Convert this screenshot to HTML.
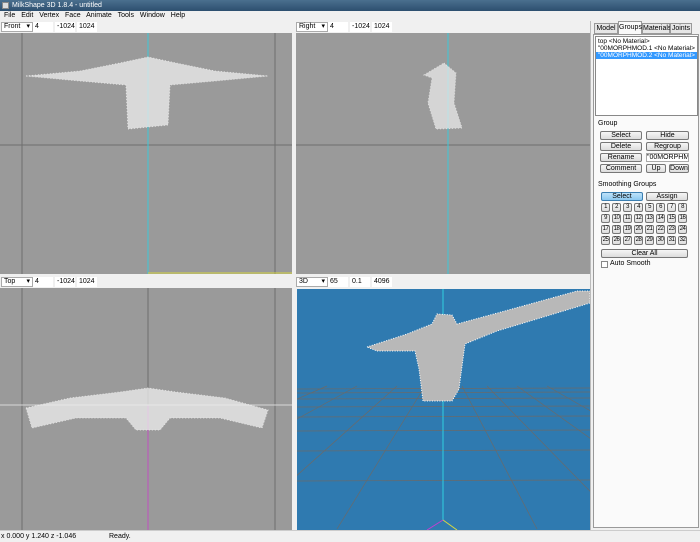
<!DOCTYPE html>
<html><head><style>
*{margin:0;padding:0;box-sizing:border-box}
body{width:700px;height:542px;overflow:hidden;background:#f0f0f0;font-family:"Liberation Sans",sans-serif;font-size:7px;color:#000;position:relative}
.a{position:absolute}
.vp{position:absolute;background:#9a9a9a;overflow:hidden}
.tb{position:absolute;height:12px;background:#f0f0f0}
.sel{position:absolute;top:1px;height:10px;width:32px;background:#fff;border:1px solid #aaa;font-size:7px;line-height:8px;padding-left:2px}
.sel:after{content:"▾";position:absolute;right:2px;top:0;font-size:7px}
.in{position:absolute;top:1px;height:10px;background:#fff;font-size:7px;line-height:10px;padding-left:2px}
.btn{position:absolute;height:9px;border:1px solid #777;border-radius:2px;background:linear-gradient(#f6f6f6,#dcdcdc);font-size:7px;line-height:7px;text-align:center}
.sm{position:absolute;width:9px;height:9px;border:1px solid #777;border-radius:2px;background:linear-gradient(#f6f6f6,#dcdcdc);font-size:6px;line-height:7px;text-align:center;letter-spacing:-.5px}
.li{white-space:nowrap;font-size:6.5px;line-height:7px}
</style></head><body>
<div class="a" style="left:0;top:0;width:700px;height:11px;background:linear-gradient(#4a6f8e,#2d4f6f);color:#fff;font-size:7px;line-height:11px;padding-left:12px">MilkShape 3D 1.8.4 - untitled</div>
<div class="a" style="left:2px;top:2px;width:7px;height:7px;background:#ddd;border:1px solid #888"></div>
<div class="a" style="left:0;top:11px;width:700px;height:10px;background:#f0f0f0;font-size:7px;line-height:10px;padding-left:4px;word-spacing:4px">File Edit Vertex Face Animate Tools Window Help</div>

<div class="tb" style="left:0;top:21px;width:292px"><div class="sel" style="left:1px">Front</div><div class="in" style="left:33px;width:20px">4</div><div class="in" style="left:55px;width:20px">-1024</div><div class="in" style="left:77px;width:20px">1024</div></div>
<div class="tb" style="left:296px;top:21px;width:294px"><div class="sel" style="left:0">Right</div><div class="in" style="left:32px;width:20px">4</div><div class="in" style="left:54px;width:20px">-1024</div><div class="in" style="left:76px;width:20px">1024</div></div>
<div class="tb" style="left:0;top:276px;width:292px"><div class="sel" style="left:1px">Top</div><div class="in" style="left:33px;width:20px">4</div><div class="in" style="left:55px;width:20px">-1024</div><div class="in" style="left:77px;width:20px">1024</div></div>
<div class="tb" style="left:296px;top:276px;width:294px"><div class="sel" style="left:0">3D</div><div class="in" style="left:32px;width:20px">65</div><div class="in" style="left:54px;width:20px">0.1</div><div class="in" style="left:76px;width:20px">4096</div></div>

<div class="vp" style="left:0;top:33px;width:292px;height:241px">
<svg width="292" height="241">
<line x1="22" y1="0" x2="22" y2="241" stroke="#6e6e6e"/><line x1="275" y1="0" x2="275" y2="241" stroke="#6e6e6e"/>
<line x1="0" y1="112" x2="292" y2="112" stroke="#6e6e6e"/>
<line x1="148" y1="0" x2="148" y2="241" stroke="#3cc8d8"/>
<line x1="148" y1="240" x2="292" y2="240" stroke="#d8d840"/>
<path d="M26 43 L80 38 L120 30 L148 24 L176 30 L215 38 L268 43 L215 48 L170 52 L168 92 L128 96 L126 52 L80 48 Z" fill="#eee" stroke="#fff" stroke-dasharray="1 2" opacity=".75"/>
</svg></div>
<div class="vp" style="left:296px;top:33px;width:294px;height:241px">
<svg width="294" height="241">
<line x1="0" y1="112" x2="294" y2="112" stroke="#6e6e6e"/>
<line x1="152" y1="0" x2="152" y2="241" stroke="#3cc8d8"/>
<path d="M148 30 L160 40 L158 70 L166 95 L140 96 L132 70 L136 45 L128 42 Z" fill="#eee" stroke="#fff" stroke-dasharray="1 2" opacity=".7"/>
</svg></div>
<div class="vp" style="left:0;top:288px;width:292px;height:242px">
<svg width="292" height="242">
<line x1="22" y1="0" x2="22" y2="242" stroke="#6e6e6e"/><line x1="275" y1="0" x2="275" y2="242" stroke="#6e6e6e"/>
<line x1="148" y1="0" x2="148" y2="117" stroke="#6e6e6e"/>
<line x1="148" y1="117" x2="148" y2="242" stroke="#c050c0"/>
<line x1="0" y1="117" x2="292" y2="117" stroke="#d8d8d8"/>
<path d="M26 120 L70 110 L120 104 L148 100 L176 104 L225 110 L268 122 L262 140 L220 130 L170 130 L160 142 L136 142 L126 130 L76 130 L32 140 Z" fill="#eee" stroke="#fff" stroke-dasharray="1 2" opacity=".75"/>
</svg></div>
<div class="vp" style="left:297px;top:289px;width:293px;height:241px;background:#2f7ab0">
<svg width="293" height="241">
<g stroke="#6a6a6a" stroke-width=".7" fill="none">
<path d="M0 100 L293 99 M0 104 L293 103 M0 110 L293 109 M0 118 L293 117 M0 128 L293 127 M0 142 L293 141 M0 162 L293 161 M0 192 L293 191"/>
<path d="M60 97 L-200 240 M100 97 L-60 240 M128 97 L40 240 M165 97 L240 240 M190 97 L330 240 M220 97 L420 240 M250 97 L500 240 M30 97 L-300 240"/>
</g>
<line x1="146" y1="0" x2="146" y2="231" stroke="#30d0e0"/>
<path d="M146 231 L160 241" stroke="#d8d840"/><path d="M146 231 L130 241" stroke="#c040d0"/>
<path d="M70 58 L110 45 L135 35 L140 25 L155 26 L160 35 L215 20 L280 2 L293 2 L293 14 L200 42 L168 55 L162 100 L155 112 L126 112 L122 80 L118 62 L80 62 Z" fill="#b8b8b8" stroke="#fff" stroke-width="1" stroke-dasharray="1 1.5"/>
</svg></div>
<div class="a" style="left:292px;top:21px;width:4px;height:509px;background:#f0f0f0"></div>

<div class="a" style="left:0;top:530px;width:700px;height:12px;background:#f0f0f0;border-top:1px solid #ccc;font-size:7px;line-height:11px;padding-left:1px">x 0.000 y 1.240 z -1.046<span style="position:absolute;left:109px">Ready.</span></div>

<div class="a" style="left:590px;top:21px;width:110px;height:509px;background:#f0f0f0;border-left:1px solid #bbb">
<div class="a" style="left:3px;top:2px;width:24px;height:11px;border:1px solid #999;background:#e6e6e6;text-align:center;line-height:10px">Model</div>
<div class="a" style="left:27px;top:0;width:24px;height:13px;border:1px solid #999;border-bottom:none;background:#fafafa;text-align:center;line-height:12px">Groups</div>
<div class="a" style="left:51px;top:2px;width:28px;height:11px;border:1px solid #999;background:#e6e6e6;text-align:center;line-height:10px">Materials</div>
<div class="a" style="left:79px;top:2px;width:22px;height:11px;border:1px solid #999;background:#e6e6e6;text-align:center;line-height:10px">Joints</div>
<div class="a" style="left:2px;top:13px;width:106px;height:494px;border:1px solid #999;background:#fafafa"></div>
<div class="a" style="left:4px;top:15px;width:103px;height:80px;border:1px solid #888;background:#fff;padding:1px 0;overflow:hidden">
<div class="li" style="padding-left:2px">top &lt;No Material&gt;</div>
<div class="li" style="padding-left:2px">"00MORPHMOD.1 &lt;No Material&gt;</div>
<div class="li" style="padding-left:2px;background:#3399ff;color:#fff">"00MORPHMOD.2 &lt;No Material&gt;</div></div>
<div class="a" style="left:7px;top:99px">Group</div>
<div class="btn" style="left:9px;top:110px;width:42px">Select</div><div class="btn" style="left:55px;top:110px;width:43px">Hide</div>
<div class="btn" style="left:9px;top:121px;width:42px">Delete</div><div class="btn" style="left:55px;top:121px;width:43px">Regroup</div>
<div class="btn" style="left:9px;top:132px;width:42px">Rename</div><div class="a" style="left:55px;top:132px;width:43px;height:9px;background:#fff;border:1px solid #aaa;line-height:7px;overflow:hidden;white-space:nowrap">"00MORPHMC</div>
<div class="btn" style="left:9px;top:143px;width:42px">Comment</div><div class="btn" style="left:55px;top:143px;width:20px">Up</div><div class="btn" style="left:78px;top:143px;width:20px">Down</div>
<div class="a" style="left:7px;top:160px">Smoothing Groups</div>
<div class="btn" style="left:10px;top:171px;width:42px;background:linear-gradient(#bfe3fa,#8cc8f0);border-color:#3c7fb1">Select</div><div class="btn" style="left:55px;top:171px;width:42px">Assign</div>
<div class="sm" style="left:10px;top:182px">1</div><div class="sm" style="left:21px;top:182px">2</div><div class="sm" style="left:32px;top:182px">3</div><div class="sm" style="left:43px;top:182px">4</div><div class="sm" style="left:54px;top:182px">5</div><div class="sm" style="left:65px;top:182px">6</div><div class="sm" style="left:76px;top:182px">7</div><div class="sm" style="left:87px;top:182px">8</div>
<div class="sm" style="left:10px;top:193px">9</div><div class="sm" style="left:21px;top:193px">10</div><div class="sm" style="left:32px;top:193px">11</div><div class="sm" style="left:43px;top:193px">12</div><div class="sm" style="left:54px;top:193px">13</div><div class="sm" style="left:65px;top:193px">14</div><div class="sm" style="left:76px;top:193px">15</div><div class="sm" style="left:87px;top:193px">16</div>
<div class="sm" style="left:10px;top:204px">17</div><div class="sm" style="left:21px;top:204px">18</div><div class="sm" style="left:32px;top:204px">19</div><div class="sm" style="left:43px;top:204px">20</div><div class="sm" style="left:54px;top:204px">21</div><div class="sm" style="left:65px;top:204px">22</div><div class="sm" style="left:76px;top:204px">23</div><div class="sm" style="left:87px;top:204px">24</div>
<div class="sm" style="left:10px;top:215px">25</div><div class="sm" style="left:21px;top:215px">26</div><div class="sm" style="left:32px;top:215px">27</div><div class="sm" style="left:43px;top:215px">28</div><div class="sm" style="left:54px;top:215px">29</div><div class="sm" style="left:65px;top:215px">30</div><div class="sm" style="left:76px;top:215px">31</div><div class="sm" style="left:87px;top:215px">32</div>
<div class="btn" style="left:10px;top:228px;width:87px">Clear All</div>
<div class="a" style="left:10px;top:240px;width:7px;height:7px;border:1px solid #888;background:#fff"></div><div class="a" style="left:19px;top:239px">Auto Smooth</div>
</div>
</body></html>
